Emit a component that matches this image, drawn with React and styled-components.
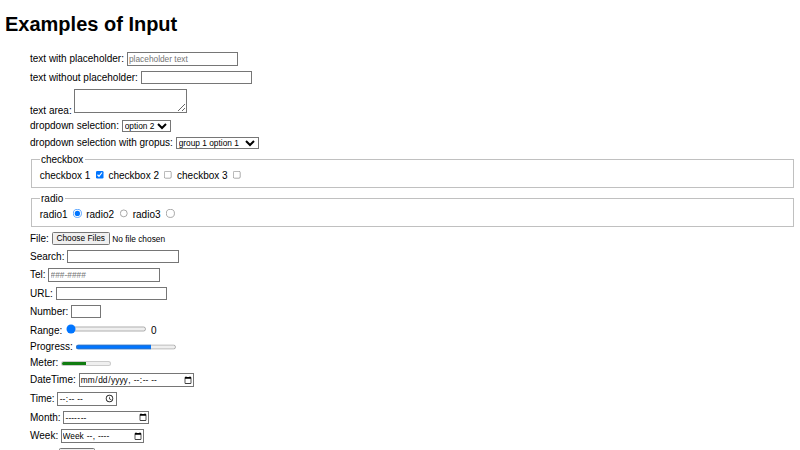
import React from 'react';
import styled, { createGlobalStyle } from 'styled-components';

const GlobalStyle = createGlobalStyle`
  body {
    margin: 0;
    background: #fff;
  }
`;

// the whole page is drawn at 1280 wide and shrunk to the 800 window
const Page = styled.div`
  zoom: 0.625;
  margin: 8px;
  font-family: 'Liberation Sans', Arial, sans-serif;
  font-size: 16px;
  color: #000;
`;

const Title = styled.h1`
  font-size: 2em;
  font-weight: bold;
  margin: 0.67em 0;
`;

const Form = styled.form`
  padding-left: 40px;
`;

const Row = styled.div`
  padding: 4px 0;
`;

const Group = styled.fieldset`
  margin: 0 2px;
  padding: 0.35em 0.75em 0.625em;
  border: 2px groove rgb(192, 192, 192);
`;

const Field = styled.input`
  font-family: 'Liberation Sans', Arial, sans-serif;
  box-sizing: ${(props) => (props.$outer ? 'border-box' : 'content-box')};
  width: ${(props) => props.width};
`;

const TextField = styled(Field)`
  width: ${(props) => props.width || '171px'};
`;

const Area = styled.textarea`
  width: 173px;
`;

const Select = styled.select`
  font-family: 'Liberation Sans', Arial, sans-serif;
  width: ${(props) => props.width};
`;

const Main = () => {
  return (
    <Page>
      <GlobalStyle />
      <Title>Examples of Input</Title>
      <Form onSubmit={(e) => e.preventDefault()}>
        <Row>
          text with placeholder: <TextField type='text' placeholder='placeholder text' />
        </Row>
        <Row>
          text without placeholder: <TextField type='text' />
        </Row>
        <Row>
          text area: <Area />
        </Row>
        <Row>
          dropdown selection:{' '}
          <Select defaultValue='2'>
            <option value='1'>option 1</option>
            <option value='2'>option 2</option>
            <option value='3'>option 3</option>
          </Select>
        </Row>
        <Row>
          dropdown selection with gropus:{' '}
          <Select defaultValue='1-1' width='133px'>
            <optgroup label='group 1'>
              <option value='1-1'>group 1 option 1</option>
              <option value='1-2'>group 1 option 2</option>
            </optgroup>
            <optgroup label='group 2'>
              <option value='2-1'>group 2 option 1</option>
              <option value='2-2'>group 2 option 2</option>
            </optgroup>
          </Select>
        </Row>
        <Row>
          <Group>
            <legend>checkbox</legend>
            checkbox 1 <Field type='checkbox' defaultChecked /> checkbox 2{' '}
            <Field type='checkbox' /> checkbox 3 <Field type='checkbox' />
          </Group>
        </Row>
        <Row>
          <Group>
            <legend>radio</legend>
            radio1 <Field type='radio' name='radio' defaultChecked /> radio2{' '}
            <Field type='radio' name='radio' /> radio3 <Field type='radio' name='radio' />
          </Group>
        </Row>
        <Row>
          File: <Field type='file' multiple />
        </Row>
        <Row>
          Search: <TextField type='search' />
        </Row>
        <Row>
          Tel: <TextField type='tel' placeholder='###-####' />
        </Row>
        <Row>
          URL: <TextField type='url' />
        </Row>
        <Row>
          Number: <Field type='number' width='40px' />
        </Row>
        <Row>
          Range: <Field type='range' min='0' max='100' defaultValue='0' /> <output>0</output>
        </Row>
        <Row>
          Progress: <progress value='75' max='100' />
        </Row>
        <Row>
          Meter: <meter value='0.5' />
        </Row>
        <Row>
          DateTime: <Field type='datetime-local' $outer width='185px' />
        </Row>
        <Row>
          Time: <Field type='time' $outer width='95px' />
        </Row>
        <Row>
          Month: <Field type='month' width='133px' />
        </Row>
        <Row>
          Week: <Field type='week' />
        </Row>
        <Row>
          Color: <Field type='color' />
        </Row>
      </Form>
    </Page>
  );
};

export default Main;
